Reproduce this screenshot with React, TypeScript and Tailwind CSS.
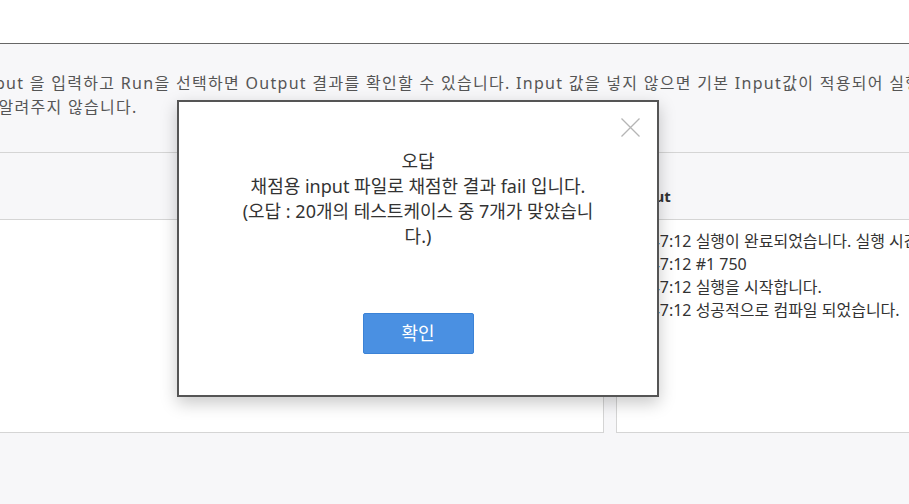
import React from 'react';

const logs = [
    '17:47:12 실행이 완료되었습니다. 실행 시간 : 0.01초',
    '17:47:12 #1 750',
    '17:47:12 실행을 시작합니다.',
    '17:47:12 성공적으로 컴파일 되었습니다.',
];

const App = () => {
    return (
        <div
            className="relative w-[909px] h-[504px] overflow-hidden bg-[#f7f7f9] text-[#333]"
            style={{ fontFamily: '"Noto Sans", "Noto Sans CJK KR", sans-serif' }}
        >
            {/* Top bar */}
            <div className="h-[44px] bg-white border-b border-[#666]" />

            {/* Help text (page is scrolled a little to the right) */}
            <div className="-ml-[23px] pt-[27px] text-[16px] leading-[24px] tracking-[1.3px] text-[#555] whitespace-nowrap">
                <div>Input 을 입력하고 Run을 선택하면 Output 결과를 확인할 수 있습니다. Input 값을 넣지 않으면 기본 Input값이 적용되어 실행되며, 기본 Input 값</div>
                <div>은 알려주지 않습니다.</div>
            </div>

            <div className="-ml-[200px] w-[1450px] mt-[33px] flex gap-[12px]">
                {/* Input panel */}
                <div className="w-[804px] flex flex-col">
                    <div className="h-[68px] border-y border-[#d5d5d5] flex items-end pb-[12px] pl-[20px]">
                        <span className="text-[15px] font-bold leading-[22px]">Input</span>
                    </div>
                    <div className="h-[213px] bg-white border-x border-b border-[#d5d5d5]" />
                </div>

                {/* Output panel */}
                <div className="w-[626px] flex flex-col">
                    <div className="h-[68px] border-y border-[#d5d5d5] flex items-end pb-[12px] pl-[1px]">
                        <span className="text-[15px] font-bold leading-[22px]">Output</span>
                    </div>
                    <div className="h-[213px] bg-white border-x border-b border-[#d5d5d5] pt-[10px] pl-[11px] text-[16px] leading-[23px] text-[#333] whitespace-nowrap">
                        {logs.map((line, i) => (
                            <div key={i}>{line}</div>
                        ))}
                    </div>
                </div>
            </div>

            {/* Result dialog */}
            <div className="absolute left-[177px] top-[100px] w-[482px] h-[297px] bg-white border-2 border-[#555] shadow-[0_6px_16px_rgba(0,0,0,0.22)] flex flex-col items-center">
                <button className="absolute right-[17px] top-[16px] w-[19px] h-[19px]">
                    <svg viewBox="0 0 19 19" className="w-[19px] h-[19px]">
                        <path d="M0.5 0.5 L18.5 18.5 M18.5 0.5 L0.5 18.5" stroke="#b5b5b5" strokeWidth="1.3" fill="none" />
                    </svg>
                </button>
                <div className="pt-[47px] text-center text-[18px] leading-[25px] text-[#333] whitespace-nowrap">
                    <div>오답</div>
                    <div>채점용 input 파일로 채점한 결과 fail 입니다.</div>
                    <div>(오답 : 20개의 테스트케이스 중 7개가 맞았습니</div>
                    <div>다.)</div>
                </div>
                <button className="mt-[64px] w-[111px] h-[41px] bg-[#4a90e2] border border-[#3b82d6] rounded-[2px] text-white text-[18px]">
                    확인
                </button>
            </div>
        </div>
    );
};

export default App;
